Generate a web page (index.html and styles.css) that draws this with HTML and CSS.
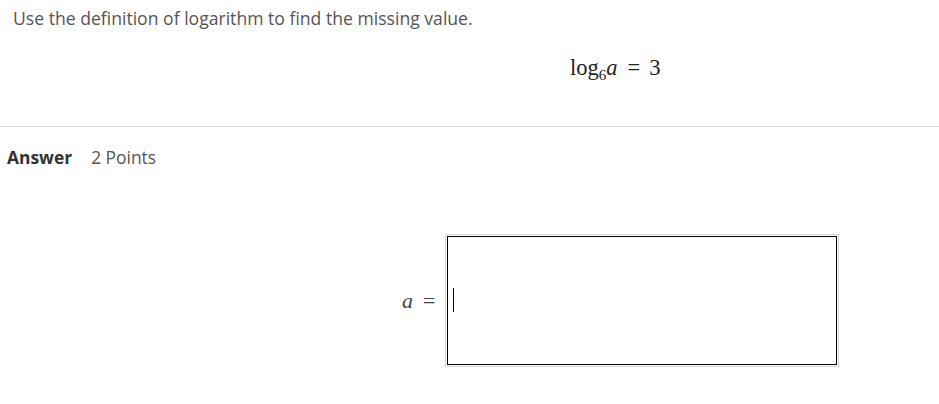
FILE: index.html
```html
<!DOCTYPE html>
<html>
<head>
<meta charset="utf-8">
<link rel="stylesheet" href="styles.css">
</head>
<body>
<div class="question">
  <p class="prompt">Use the definition of logarithm to find the missing value.</p>
  <div class="equation"><span class="fn">log</span><sub class="base">6</sub><span class="var">a</span><span class="eq">=</span><span class="num">3</span></div>
</div>
<div class="answer">
  <div class="answer-head"><span class="label">Answer</span><span class="points">2 Points</span></div>
  <div class="answer-row">
    <span class="lhs"><span class="var">a</span><span class="eq">=</span></span>
    <div class="box-outer"><div class="box"><span class="cursor"></span></div></div>
  </div>
</div>
</body>
</html>
```
FILE: styles.css
```css
html, body { margin: 0; padding: 0; background: #fff; }
body { width: 939px; height: 404px; overflow: hidden; font-family: "Open Sans", sans-serif; }
.question { height: 127px; border-bottom: 1px solid #dcdcdc; box-sizing: border-box; }
.prompt { margin: 0; padding: 7px 0 0 13px; font-size: 17.6px; line-height: 22px; color: #555; }
.equation { padding: 25px 0 0 570px; font-family: "Liberation Serif", serif; font-size: 22.5px; color: #222; line-height: 28px; }
.base { font-size: 15px; vertical-align: -5px; line-height: 0; }
.var { font-style: italic; }
.eq { margin: 0 9px 0 10px; }
.answer-head { padding: 19px 0 0 7px; font-size: 17.4px; line-height: 22px; }
.label { font-weight: 700; color: #333; }
.points { margin-left: 19px; color: #555; }
.answer-row { display: flex; align-items: center; padding: 66px 0 0 402px; }
.lhs { font-family: "Liberation Serif", serif; font-size: 22px; color: #444; margin-right: 10px; margin-top: 1px; }
.lhs .eq { margin: 0 0 0 10px; }
.box-outer { border: 1px solid #d4d4d4; padding: 1px; }
.box { width: 388px; height: 127px; border: 1px solid #000; display: flex; align-items: center; }
.cursor { display: block; width: 1px; height: 24px; background: #000; margin-left: 5px; margin-top: -1px; }
```
